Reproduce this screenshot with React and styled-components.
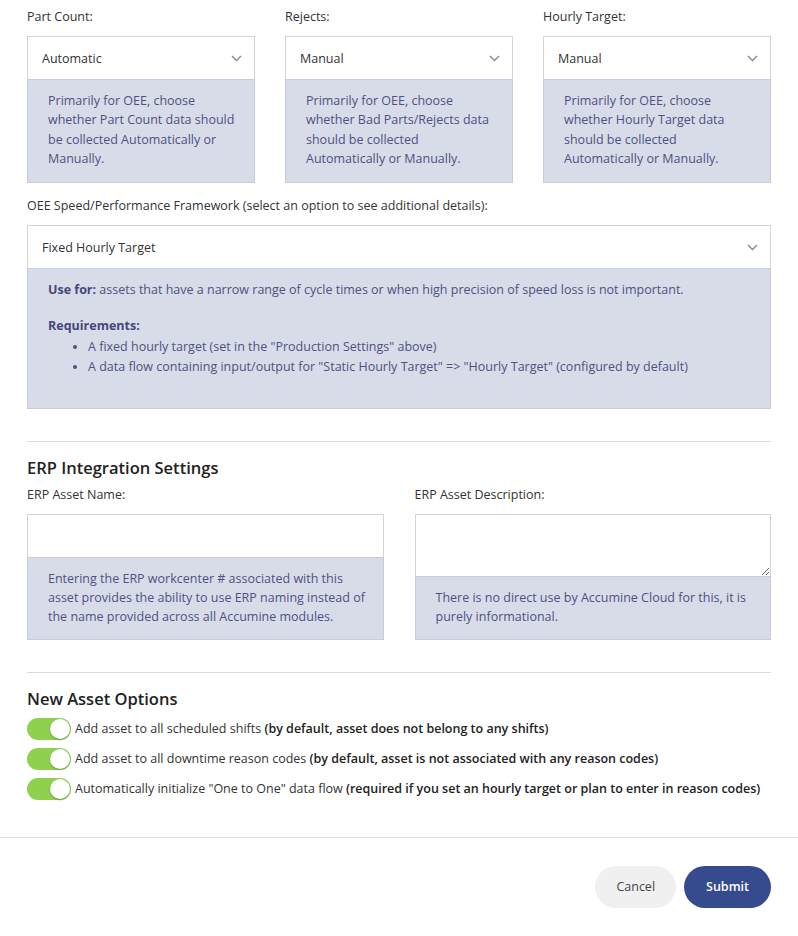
import { useState } from "react";
import styled, { createGlobalStyle, css } from "styled-components";

const GlobalStyle = createGlobalStyle`
  body {
    margin: 0;
    background: #fff;
    font-family: "Open Sans", "Noto Sans", sans-serif;
    color: #333;
  }
  * { box-sizing: border-box; }
`;

const Page = styled.div`
  width: 798px;
  background: #fff;
`;

const Body = styled.div`
  padding: 7px 27px 37px;
`;

const Grid = styled.div`
  display: grid;
  grid-template-columns: repeat(${(p) => p.cols}, 1fr);
  column-gap: ${(p) => (p.cols === 3 ? "30px" : "31px")};
`;

const Field = styled.div`
  display: flex;
  flex-direction: column;
`;

const Label = styled.label`
  font-size: 12.5px;
  line-height: 20px;
  color: #333;
  margin-bottom: 9px;
  ${(p) =>
    p.spaced &&
    css`
      margin-top: 13px;
    `}
`;

const SelectBox = styled.div`
  height: 43px;
  border: 1px solid #d4d4d4;
  border-bottom: none;
  background: #fff;
  display: flex;
  align-items: center;
  justify-content: space-between;
  padding: 0 12px 0 14px;
  font-size: 12.5px;
  color: #333;
`;

const TextInput = styled.input`
  height: 43px;
  border: 1px solid #d4d4d4;
  border-bottom: none;
  background: #fff;
  outline: none;
  font: inherit;
  padding: 0 14px;
`;

const TextArea = styled.textarea`
  height: 62px;
  border: 1px solid #d4d4d4;
  border-bottom: none;
  background: #fff;
  outline: none;
  font: inherit;
  padding: 8px 14px;
  resize: vertical;
  display: block;
`;

const Help = styled.div`
  background: #d8dce8;
  border: 1px solid #c7cbdb;
  color: #4f5183;
  font-size: 12.5px;
  line-height: 19.3px;
  padding: ${(p) => p.pad || "11px 6px 14px 20px"};
  flex: 1;
  white-space: nowrap;

  p {
    margin: 0;
  }
  p + p {
    margin-top: 17px;
  }
  b {
    font-weight: 700;
    color: #45477a;
  }
  ul {
    margin: 1px 0 16px;
    padding-left: 40px;
  }
  li {
    line-height: 20px;
  }
`;

const Wide = styled.div`
  display: flex;
  flex-direction: column;
`;

const Divider = styled.hr`
  border: none;
  border-top: 1px solid #dcdcdc;
  margin: 32px 0 14px;
`;

const Heading = styled.h3`
  margin: 0 0 5px;
  font-size: 16.5px;
  line-height: 24px;
  font-weight: 600;
  color: #222;
`;

const ToggleList = styled.div`
  display: flex;
  flex-direction: column;
  gap: 8px;
  margin-top: 7px;
`;

const ToggleRow = styled.div`
  display: flex;
  align-items: center;
  gap: 4px;
  font-size: 12.5px;
  color: #333;
  height: 22px;
  white-space: nowrap;

  b {
    font-weight: 600;
    color: #222;
  }
`;

const Switch = styled.button`
  width: 44px;
  height: 22px;
  border-radius: 11px;
  border: none;
  padding: 0;
  background: ${(p) => (p.on ? "#8fd14f" : "#ccc")};
  position: relative;
  flex-shrink: 0;
  cursor: pointer;

  &::after {
    content: "";
    position: absolute;
    top: 1px;
    left: ${(p) => (p.on ? "23px" : "1px")};
    width: 20px;
    height: 20px;
    border-radius: 50%;
    background: #fff;
    box-shadow: 0 1px 2px rgba(0, 0, 0, 0.3);
  }
`;

const Footer = styled.div`
  border-top: 1px solid #dcdcdc;
  display: flex;
  justify-content: flex-end;
  gap: 8px;
  padding: 28px 27px 28px;
`;

const Button = styled.button`
  height: 42px;
  border-radius: 21px;
  border: none;
  font: inherit;
  font-size: 12.5px;
  padding: 0 ${(p) => (p.primary ? "22px" : "21px")};
  background: ${(p) => (p.primary ? "#364b8d" : "#f0f0f0")};
  color: ${(p) => (p.primary ? "#fff" : "#444")};
  font-weight: ${(p) => (p.primary ? 600 : 400)};
`;

const Chevron = () => (
  <svg width="11" height="7" viewBox="0 0 11 7" fill="none">
    <path d="M1 1l4.5 4.5L10 1" stroke="#888" strokeWidth="1.4" />
  </svg>
);

const Select = ({ value }) => (
  <SelectBox>
    <span>{value}</span>
    <Chevron />
  </SelectBox>
);

const Lines = ({ lines }) =>
  lines.map((l, i) => (
    <span key={i}>
      {l}
      {i < lines.length - 1 && <br />}
    </span>
  ));

const topFields = [
  {
    label: "Part Count:",
    value: "Automatic",
    help: [
      "Primarily for OEE, choose",
      "whether Part Count data should",
      "be collected Automatically or",
      "Manually.",
    ],
  },
  {
    label: "Rejects:",
    value: "Manual",
    help: [
      "Primarily for OEE, choose",
      "whether Bad Parts/Rejects data",
      "should be collected",
      "Automatically or Manually.",
    ],
  },
  {
    label: "Hourly Target:",
    value: "Manual",
    help: [
      "Primarily for OEE, choose",
      "whether Hourly Target data",
      "should be collected",
      "Automatically or Manually.",
    ],
  },
];

const toggleItems = [
  {
    text: "Add asset to all scheduled shifts",
    note: "(by default, asset does not belong to any shifts)",
  },
  {
    text: "Add asset to all downtime reason codes",
    note: "(by default, asset is not associated with any reason codes)",
  },
  {
    text: 'Automatically initialize "One to One" data flow',
    note: "(required if you set an hourly target or plan to enter in reason codes)",
  },
];

export default function App() {
  const [toggles, setToggles] = useState([true, true, true]);

  const flip = (i) =>
    setToggles((t) => t.map((v, j) => (j === i ? !v : v)));

  return (
    <Page>
      <GlobalStyle />
      <Body>
        <Grid cols={3}>
          {topFields.map((f) => (
            <Field key={f.label}>
              <Label>{f.label}</Label>
              <Select value={f.value} />
              <Help>
                <Lines lines={f.help} />
              </Help>
            </Field>
          ))}
        </Grid>

        <Wide>
          <Label spaced>
            OEE Speed/Performance Framework (select an option to see additional
            details):
          </Label>
          <Select value="Fixed Hourly Target" />
          <Help pad="11px 20px 15px">
            <p>
              <b>Use for:</b> assets that have a narrow range of cycle times or
              when high precision of speed loss is not important.
            </p>
            <p>
              <b>Requirements:</b>
            </p>
            <ul>
              <li>A fixed hourly target (set in the "Production Settings" above)</li>
              <li>
                A data flow containing input/output for "Static Hourly Target"
                =&gt; "Hourly Target" (configured by default)
              </li>
            </ul>
          </Help>
        </Wide>

        <Divider />
        <Heading>ERP Integration Settings</Heading>
        <Grid cols={2}>
          <Field>
            <Label>ERP Asset Name:</Label>
            <TextInput />
            <Help pad="11px 6px 12px 20px">
              <Lines
                lines={[
                  "Entering the ERP workcenter # associated with this",
                  "asset provides the ability to use ERP naming instead of",
                  "the name provided across all Accumine modules.",
                ]}
              />
            </Help>
          </Field>
          <Field>
            <Label>ERP Asset Description:</Label>
            <TextArea />
            <Help pad="11px 6px 12px 20px">
              <Lines
                lines={[
                  "There is no direct use by Accumine Cloud for this, it is",
                  "purely informational.",
                ]}
              />
            </Help>
          </Field>
        </Grid>

        <Divider />
        <Heading>New Asset Options</Heading>
        <ToggleList>
          {toggleItems.map((t, i) => (
            <ToggleRow key={i}>
              <Switch on={toggles[i]} onClick={() => flip(i)} />
              <span>
                {t.text} <b>{t.note}</b>
              </span>
            </ToggleRow>
          ))}
        </ToggleList>
      </Body>
      <Footer>
        <Button>Cancel</Button>
        <Button primary>Submit</Button>
      </Footer>
    </Page>
  );
}
